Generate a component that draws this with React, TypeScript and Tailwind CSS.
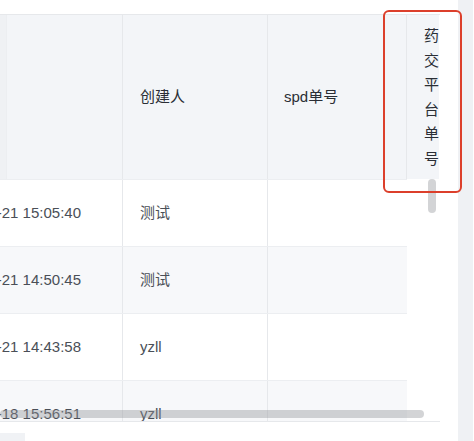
import React from "react";

const rows = [
  { time: "2024-03-21 15:05:40", user: "测试" },
  { time: "2024-03-21 14:50:45", user: "测试" },
  { time: "2024-03-21 14:43:58", user: "yzll" },
  { time: "2024-03-18 15:56:51", user: "yzll" },
];

export default function App() {
  return (
    <div
      className="relative flex h-[441px] w-[474px] overflow-hidden bg-white text-[15px]"
      style={{ fontFamily: '"Liberation Sans", "Noto Sans CJK SC", sans-serif' }}
    >
      <div className="flex w-[458px] flex-col">
        <div className="h-[14px] shrink-0" />
        <div className="relative flex h-[408px] shrink-0 flex-col overflow-hidden border-t border-b border-[#e6e8eb] w-[440px]">
          {/* header */}
          <div className="flex h-[164px] shrink-0 text-[#2a2e35]">
            <div className="w-[7px] shrink-0 border-r border-[#eceef1] bg-[#eff1f4]" />
            <div className="w-[116px] shrink-0 border-r border-[#e6e8eb] bg-[#f3f5f8]" />
            <div className="flex w-[145px] shrink-0 items-center border-r border-[#e6e8eb] bg-[#f3f5f8] pl-[17px]">
              创建人
            </div>
            <div className="flex w-[139px] shrink-0 items-center border-r border-[#e6e8eb] bg-[#f3f5f8] pl-[16px]">
              spd单号
            </div>
            <div className="flex w-[32px] shrink-0 flex-col items-start bg-[#f3f5f8] pl-[17px] pt-[9px] leading-[24.6px]">
              {"药交平台单号".split("").map((c, i) => (
                <span key={i}>{c}</span>
              ))}
            </div>
          </div>
          {/* body */}
          <div className="flex w-[407px] flex-col text-[#4a4f57]">
            {rows.map((r, i) => (
              <div
                key={i}
                className={`flex h-[67px] shrink-0 border-t border-[#eceef1] ${
                  i % 2 === 1 ? "bg-[#f7f8fa]" : "bg-white"
                }`}
              >
                <div className="flex w-[123px] shrink-0 items-center justify-end overflow-hidden whitespace-nowrap border-r border-[#e6e8eb] pr-[41px]">
                  <span className="shrink-0">{r.time}</span>
                </div>
                <div className="flex w-[145px] shrink-0 items-center border-r border-[#e6e8eb] pl-[17px]">
                  {r.user}
                </div>
                <div className="w-[139px] shrink-0" />
              </div>
            ))}
          </div>
          {/* horizontal scrollbar thumb */}
          <div className="absolute left-0 top-[395px] h-[8px] w-[424px] rounded-full bg-[#909399]/40" />
          {/* vertical scrollbar thumb */}
          <div className="absolute left-[428px] top-[164px] h-[34px] w-[8px] rounded-full bg-[#909399]/40" />
        </div>
        <div className="mt-[11px] h-[8px] w-[25px] bg-[#f0f2f5]" />
      </div>
      <div className="w-[15px] shrink-0 bg-[#eff1f4]" />
      {/* red highlight box */}
      <div className="pointer-events-none absolute left-[383px] top-[10px] h-[183px] w-[79px] rounded-[6px] border-2 border-[#dc3f2b]" />
    </div>
  );
}
